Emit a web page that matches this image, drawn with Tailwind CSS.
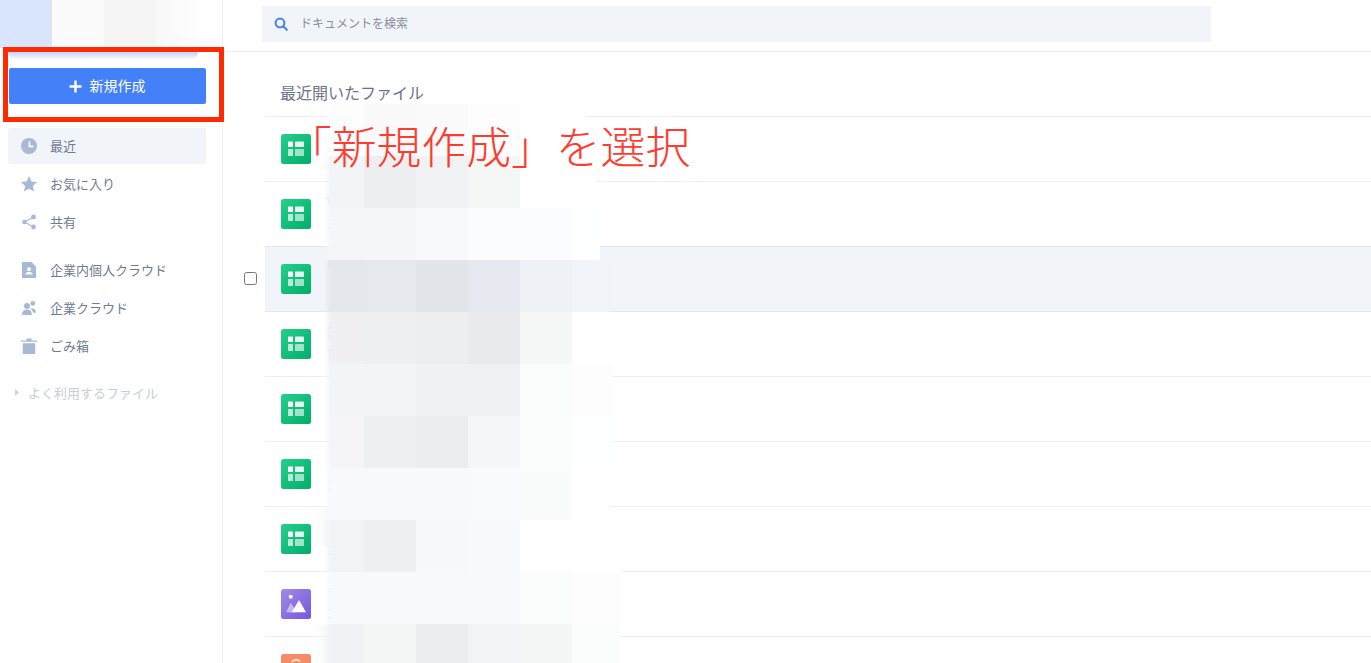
<!doctype html>
<html lang="ja">
<head>
<meta charset="utf-8">
<script src="https://cdn.jsdelivr.net/npm/@tailwindcss/browser@4"></script>
<title>最近開いたファイル</title>
</head>
<body class="bg-white">
<svg class="absolute w-0 h-0" aria-hidden="true">
  <defs>
    <linearGradient id="g" x1="0" y1="0" x2="1" y2="1"><stop offset="0" stop-color="#25d08c"/><stop offset="1" stop-color="#02ad69"/></linearGradient>
    <linearGradient id="p" x1="0" y1="0" x2="1" y2="1"><stop offset="0" stop-color="#a18ae9"/><stop offset="1" stop-color="#7558dc"/></linearGradient>
    <symbol id="sheet" viewBox="0 0 30 30">
      <rect width="30" height="30" rx="2.5" fill="url(#g)"/>
      <rect x="7" y="7.6" width="5" height="5.4" rx=".6" fill="#fff"/>
      <rect x="14" y="7.6" width="9" height="5.4" rx=".6" fill="#fff" fill-opacity=".88"/>
      <rect x="7" y="15" width="5" height="7" rx=".6" fill="#fff" fill-opacity=".7"/>
      <rect x="14" y="15" width="9" height="7" rx=".6" fill="#fff" fill-opacity=".6"/>
    </symbol>
  </defs>
</svg>
<div class="relative flex w-[1371px] h-[663px] overflow-hidden font-['Noto_Sans_CJK_JP','Noto_Sans',sans-serif]">

  <aside class="w-[223px] shrink-0 border-r border-[#eceef1] flex flex-col">
    <div class="h-[48px] w-[207px] flex shrink-0">
      <div class="w-[52px] bg-[#d9e4fd]"></div>
      <div class="w-[52px] bg-[#fbfbfb]"></div>
      <div class="w-[52px] bg-[#f5f5f5]"></div>
      <div class="w-[51px] bg-gradient-to-r from-[#f8f8f8] to-white"></div>
    </div>
    <div class="h-[12px] w-[190px] ml-[8px] rounded-b-lg bg-gradient-to-b from-[#a0bbf8] to-white shrink-0"></div>
    <button class="mt-[8px] ml-[9px] w-[197px] h-[36px] shrink-0 rounded-[2px] bg-[#4480f8] text-white text-[14px] flex items-center justify-center gap-[8px] pb-[2px]">
      <svg width="13" height="13" viewBox="0 0 13 13" class="mt-[2px] -ml-[1px]"><path d="M5.3 0.5h2.4v4.8h4.8v2.4H7.7v4.8H5.3V7.7H0.5V5.3h4.8z" fill="#fff"/></svg>
      <span>新規作成</span>
    </button>

    <nav class="mt-[24px] ml-[8px] w-[198px] text-[13px] text-[#6f7b94] flex flex-col">
      <a class="h-[36px] rounded-[2px] bg-[#f1f4f9] flex items-center pl-[13px] gap-[14px]">
        <svg width="16" height="16" viewBox="0 0 16 16" class="-mr-[1px]"><circle cx="8" cy="8" r="8" fill="#a8b9d6"/><path d="M7.6 3.4h1.6v4.2h3.2v1.6H7.6z" fill="#fff"/></svg>
        <span>最近</span>
      </a>
      <a class="h-[36px] mt-[2px] flex items-center pl-[13px] gap-[14px]">
        <svg width="16" height="16" viewBox="0 0 16 16" class="-mr-[1px]"><path d="M8 .3l2.4 5.1 5.6.7-4.1 3.8 1.1 5.6L8 12.8l-5 2.7 1.1-5.6L0 6.1l5.6-.7z" fill="#a8b9d6"/></svg>
        <span>お気に入り</span>
      </a>
      <a class="h-[36px] mt-[2px] flex items-center pl-[13px] gap-[14px]">
        <svg width="16" height="16" viewBox="0 0 16 16" class="-mr-[1px]"><g fill="#a8b9d6"><circle cx="3.5" cy="8" r="2.3"/><circle cx="12.5" cy="3" r="2.4"/><circle cx="12.5" cy="13" r="2.4"/></g><path d="M12.5 3L3.5 8l9 5" fill="none" stroke="#a8b9d6" stroke-width="1.1"/></svg>
        <span>共有</span>
      </a>

      <a class="h-[36px] mt-[12px] flex items-center pl-[13px] gap-[14px]">
        <svg width="16" height="16" viewBox="0 0 16 16" class="-mr-[1px]"><path d="M1 0h9.5L15 4.5V16H1z" fill="#a8b9d6"/><circle cx="8" cy="7.3" r="2" fill="#fff"/><path d="M4.3 12.6c.4-1.9 2-2.5 3.7-2.5s3.3.6 3.7 2.5z" fill="#fff"/></svg>
        <span>企業内個人クラウド</span>
      </a>
      <a class="h-[36px] mt-[2px] flex items-center pl-[13px] gap-[14px]">
        <svg width="16" height="16" viewBox="0 0 16 16" class="-mr-[1px]"><g fill="#a8b9d6"><circle cx="6" cy="6" r="3"/><circle cx="11.8" cy="3.4" r="2.4"/><path d="M1 15c0-3.600 2-5.400 5-5.400s4.800 1.800 4.800 5.400z"/><path d="M9.800 8.400c2.600-.3 5.200 1 5.200 4.400h-3c-.2-1.800-1-3.200-2.200-4.400z"/></g></svg>
        <span>企業クラウド</span>
      </a>
      <a class="h-[36px] mt-[2px] flex items-center pl-[13px] gap-[14px]">
        <svg width="16" height="16" viewBox="0 0 16 16" class="-mr-[1px]"><path d="M0 2.400h5.500V.6h5v1.800H16v1.400H0zM1.800 5.200h12.400V16H1.800z" fill="#a8b9d6"/></svg>
        <span>ごみ箱</span>
      </a>
    </nav>

    <div class="mt-[19px] ml-[15px] flex items-center gap-[9px] text-[13px] text-[#c9cdd5]">
      <svg width="4" height="7" viewBox="0 0 4 7"><path d="M0 0l4 3.500L0 7z" fill="#cfd3da"/></svg>
      <span>よく利用するファイル</span>
    </div>
  </aside>

  <main class="flex-1 min-w-0 flex flex-col">
    <header class="h-[52px] shrink-0 border-b border-[#eceef1] pt-[6px] pl-[39px]">
      <div class="w-[949px] h-[36px] bg-[#f1f4f9] flex items-center pl-[12px] gap-[12px] text-[12px] text-[#8b909a]">
        <svg width="14" height="14" viewBox="0 0 14 14"><circle cx="6" cy="6" r="4.400" fill="none" stroke="#3f7ff2" stroke-width="2"/><path d="M9.300 9.300l3.600 3.600" stroke="#3f7ff2" stroke-width="2" stroke-linecap="round"/></svg>
        <span class="-mt-[2px]">ドキュメントを検索</span>
      </div>
    </header>

    <h1 class="h-[64px] pl-[57px] pt-[28px] shrink-0 text-[16px] leading-[24px] font-normal text-[#6a7489]">最近開いたファイル</h1>

    <ul class="ml-[42px] flex flex-col">
      <li class="h-[65px] shrink-0 border-t border-[#eceef1] pl-[16px] pt-[17px]"><svg width="30" height="30"><use href="#sheet"/></svg></li>
      <li class="h-[65px] shrink-0 border-t border-[#eceef1] pl-[16px] pt-[17px]"><svg width="30" height="30"><use href="#sheet"/></svg></li>
      <li class="relative h-[65px] shrink-0 border-t border-[#e4e7ec] bg-[#f1f4f9] pl-[16px] pt-[17px]">
        <input type="checkbox" class="absolute -left-[21px] top-[25px] w-[13px] h-[13px]" aria-label="選択">
        <svg width="30" height="30"><use href="#sheet"/></svg>
      </li>
      <li class="h-[65px] shrink-0 border-t border-[#e4e7ec] pl-[16px] pt-[17px]"><svg width="30" height="30"><use href="#sheet"/></svg></li>
      <li class="h-[65px] shrink-0 border-t border-[#eceef1] pl-[16px] pt-[17px]"><svg width="30" height="30"><use href="#sheet"/></svg></li>
      <li class="h-[65px] shrink-0 border-t border-[#eceef1] pl-[16px] pt-[17px]"><svg width="30" height="30"><use href="#sheet"/></svg></li>
      <li class="h-[65px] shrink-0 border-t border-[#eceef1] pl-[16px] pt-[17px]"><svg width="30" height="30"><use href="#sheet"/></svg></li>
      <li class="h-[65px] shrink-0 border-t border-[#eceef1] pl-[16px] pt-[17px]">
        <svg width="30" height="30" viewBox="0 0 30 30">
          <rect width="30" height="30" rx="2.500" fill="url(#p)"/>
          <circle cx="9.700" cy="7.800" r="2" fill="#fff"/>
          <path d="M9.700 13.700L5 23.300h11z" fill="#fff" fill-opacity=".5"/>
          <path d="M18 11l7 12.300H10.700z" fill="#fff"/>
        </svg>
      </li>
      <li class="h-[65px] shrink-0 border-t border-[#eceef1] pl-[16px] pt-[17px]">
        <svg width="30" height="30" viewBox="0 0 30 30">
          <rect width="30" height="30" rx="2.500" fill="#f68c66"/>
          <path d="M11 8c1-2.500 6-3 8-.5" fill="none" stroke="#fff" stroke-width="2" stroke-opacity=".7"/>
        </svg>
      </li>
    </ul>
  </main>

  <!-- fragments of the file names left showing at the mosaic's soft edge -->
  <span class="absolute left-[327px] top-[194px] text-[13px] leading-[16px] text-[#d6d7da]">V</span>
  <span class="absolute left-[327px] top-[216px] text-[13px] leading-[16px] text-[#dcdde0]">2</span>
  <span class="absolute left-[327px] top-[256px] text-[13px] leading-[16px] text-[#c9cbd0]">有</span>
  <span class="absolute left-[327px] top-[324px] text-[13px] leading-[16px] text-[#d3d4d8]">2</span>
  <span class="absolute left-[327px] top-[346px] text-[13px] leading-[16px] text-[#d3d4d8]">7</span>
  <span class="absolute left-[327px] top-[477px] text-[13px] leading-[16px] text-[#d9dade]">2</span>
  <span class="absolute left-[327px] top-[542px] text-[13px] leading-[16px] text-[#d9dade]">2</span>
  <span class="absolute left-[327px] top-[584px] text-[13px] leading-[16px] text-[#c9cbd0]">テ</span>
  <span class="absolute left-[327px] top-[606px] text-[13px] leading-[16px] text-[#d3d4d8]">2</span>

  <!-- soft bulges of the mosaic to the left -->
  <div class="absolute left-[313px] top-[508px] w-[20px] h-[38px] bg-gradient-to-r from-transparent to-[#f5f6f7]"></div>
  <div class="absolute left-[314px] top-[625px] w-[20px] h-[38px] bg-gradient-to-r from-transparent to-[#f3f4f5]"></div>

  <!-- pixelated privacy mosaic lying over the list -->
  <div class="absolute left-[312px] top-[104px] w-[364px] grid grid-cols-[repeat(7,52px)] auto-rows-[52px] [mask-image:linear-gradient(to_right,transparent_12px,black_19px)]">
    <div class="bg-[#fdfdfd]"></div><div class="bg-[#f9f9fa]"></div><div class="bg-[#fbfbfb]"></div><div class="bg-[#fdfdfd]"></div><div class="bg-white"></div><div class="bg-white mr-[37px]"></div><div></div>
    <div class="bg-[#f3f4f6]"></div><div class="bg-[#edeef0]"></div><div class="bg-[#f1f2f4]"></div><div class="bg-[#f5f6f6]"></div><div class="bg-white"></div><div class="bg-white mr-[28px]"></div><div></div>
    <div class="bg-[#f5f6f8]"></div><div class="bg-[#f5f6f8]"></div><div class="bg-[#f8f9fb]"></div><div class="bg-[#fbfcfd]"></div><div class="bg-[#fbfcfd]"></div><div class="bg-[#fdfefe] mr-[24px]"></div><div></div>
    <div class="bg-[#e4e7ec]"></div><div class="bg-[#e5e8ed]"></div><div class="bg-[#e2e5ea]"></div><div class="bg-[#e5e8ee]"></div><div class="bg-[#eef1f5]"></div><div class="bg-[#f0f3f8] mr-[14px]"></div><div></div>
    <div class="bg-[#f0f0f2]"></div><div class="bg-[#eeeff1]"></div><div class="bg-[#edeef0]"></div><div class="bg-[#e9eaec]"></div><div class="bg-[#f6f7f7]"></div><div class="bg-white mr-[14px]"></div><div></div>
    <div class="bg-[#f3f4f5]"></div><div class="bg-[#f3f4f5]"></div><div class="bg-[#f0f1f3]"></div><div class="bg-[#f0f1f3]"></div><div class="bg-[#fbfcfc]"></div><div class="bg-[#fdfdfd] mr-[11px]"></div><div></div>
    <div class="bg-[#f5f5f7]"></div><div class="bg-[#eeeff1]"></div><div class="bg-[#ecedef]"></div><div class="bg-[#f6f7f9]"></div><div class="bg-[#fbfcfc]"></div><div class="bg-[#fdfefe] mr-[11px]"></div><div></div>
    <div class="bg-[#f8f9fa]"></div><div class="bg-[#f8f9fa]"></div><div class="bg-[#f8f9fa]"></div><div class="bg-[#f9fafb]"></div><div class="bg-[#fafbfb]"></div><div class="bg-white mr-[14px]"></div><div></div>
    <div class="bg-[#f2f3f4]"></div><div class="bg-[#eeeff1]"></div><div class="bg-[#f7f8fa]"></div><div class="bg-[#f8f9fb]"></div><div class="bg-white"></div><div class="bg-white mr-[2px]"></div><div></div>
    <div class="bg-[#f8f9fb]"></div><div class="bg-[#f8f9fb]"></div><div class="bg-[#f8f9fb]"></div><div class="bg-[#f8f9fb]"></div><div class="bg-[#fbfcfc]"></div><div class="bg-[#fdfdfd] mr-[2px]"></div><div></div>
    <div class="bg-[#f1f2f3]"></div><div class="bg-[#f4f5f5]"></div><div class="bg-[#ecedef]"></div><div class="bg-[#f2f3f4]"></div><div class="bg-[#f4f5f5]"></div><div class="bg-[#fbfcfc] mr-[4px]"></div><div></div>
  </div>

  <!-- annotations -->
  <div class="absolute left-[3px] top-[47px] w-[221px] h-[75px] border-[5px] border-[#ff2b00]"></div>
  <p class="absolute left-[287px] top-[114px] text-[44.8px] leading-[62px] font-light text-[#ff3b30] whitespace-nowrap">「新規作成」を選択</p>
</div>
</body>
</html>
